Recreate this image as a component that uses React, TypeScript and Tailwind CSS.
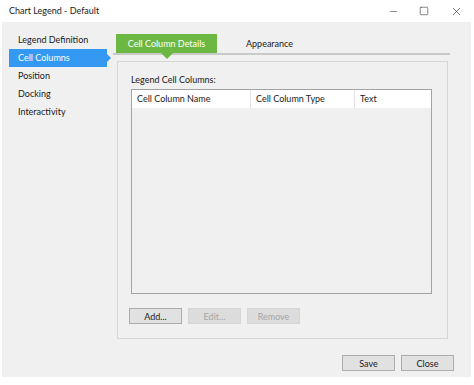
import { Minus, Square, X } from 'lucide-react';

const navItems = ['Legend Definition', 'Cell Columns', 'Position', 'Docking', 'Interactivity'];

function Btn({ label, disabled = false }: { label: string; disabled?: boolean }) {
  return (
    <button
      className={
        disabled
          ? 'w-[53px] h-[16px] border border-[#d6d6d6] bg-[#dcdcdc] text-[#a6a6a6] leading-none'
          : 'w-[53px] h-[16px] border border-[#adadad] bg-[#e1e1e1] text-[#1a1a1a] leading-none'
      }
    >
      {label}
    </button>
  );
}

export default function App() {
  return (
    <div className="w-[474px] h-[385px] bg-white overflow-hidden text-[9px] text-[#1a1a1a]" style={{ fontFamily: 'Lato, "Noto Sans", sans-serif' }}>
      {/* Title bar */}
      <div className="h-[22px] flex items-center pl-[9px]">
        <span className="flex-1">Chart Legend - Default</span>
        <div className="flex items-center text-[#333]">
          <Minus size={11} strokeWidth={1.2} className="mr-[20px]" />
          <Square size={10} strokeWidth={1.4} className="mr-[21px]" />
          <X size={13} strokeWidth={1.2} className="mr-[11px]" />
        </div>
      </div>

      {/* Body */}
      <div className="ml-[2px] w-[469px] h-[355px] bg-[#f0f0f0] flex">
        {/* Side nav */}
        <div className="w-[111px] pt-[9px] pl-[7px]">
          {navItems.map(item =>
            item === 'Cell Columns' ? (
              <div key={item} className="relative w-[98px] h-[18px] flex items-center pl-[9px] bg-[#3399f3] text-white">
                {item}
                <div className="absolute right-[-4px] top-[5px] w-0 h-0 border-y-[4px] border-y-transparent border-l-[4px] border-l-[#3399f3]" />
              </div>
            ) : (
              <div key={item} className="h-[18px] flex items-center pl-[9px]">{item}</div>
            )
          )}
        </div>

        {/* Main */}
        <div className="flex-1 flex flex-col pt-[12px]">
          <div className="flex ml-[3px] h-[19px]">
            <div className="relative w-[101px] h-[19px] bg-[#6cb842] text-white flex items-center justify-center">
              Cell Column Details
              <div className="absolute left-[45px] bottom-[-6px] w-0 h-0 border-x-[6px] border-x-transparent border-t-[6px] border-t-[#6cb842]" />
            </div>
            <div className="w-[105px] h-[19px] flex items-center justify-center">Appearance</div>
          </div>
          <div className="w-[337px] h-[2px] bg-[#c9c9c9]" />

          {/* Panel */}
          <div className="ml-[4px] mt-[6px] w-[331px] h-[278px] border border-[#d6d6d6] flex flex-col pl-[13px] pt-[11px]">
            <div className="h-[13px] flex items-center">Legend Cell Columns:</div>
            <div className="mt-[3px] w-[301px] h-[205px] border border-[#a3a3a3] bg-[#f0f0f0]">
              <div className="h-[18px] bg-white flex items-center">
                <div className="w-[119px] h-full flex items-center pl-[5px] border-r border-[#e3e3e3]">Cell Column Name</div>
                <div className="w-[104px] h-full flex items-center pl-[5px] border-r border-[#e3e3e3]">Cell Column Type</div>
                <div className="flex-1 h-full flex items-center pl-[5px]">Text</div>
              </div>
            </div>
            <div className="mt-[14px] flex gap-[6px] -ml-[2px]">
              <Btn label="Add..." />
              <Btn label="Edit..." disabled />
              <Btn label="Remove" disabled />
            </div>
          </div>

          <div className="mt-[16px] flex justify-end gap-[6px] pr-[17px]">
            <Btn label="Save" />
            <Btn label="Close" />
          </div>
        </div>
      </div>
    </div>
  );
}
